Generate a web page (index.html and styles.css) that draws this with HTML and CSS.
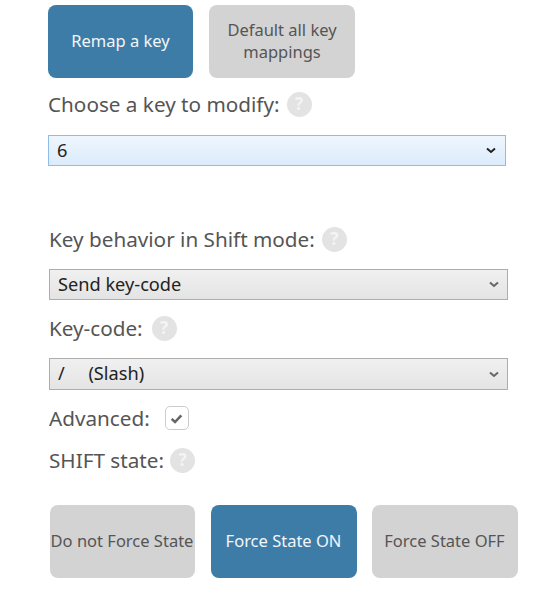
FILE: index.html
```html
<!DOCTYPE html>
<html lang="en">
<head>
<meta charset="utf-8">
<title>Remap keys</title>
<link rel="stylesheet" href="styles.css">
</head>
<body>
<main class="panel">
  <div class="btn-row top">
    <button class="btn active wide">Remap a key</button>
    <button class="btn wide2">Default all key mappings</button>
  </div>
  <div class="label choose">Choose a key to modify: <span class="help">?</span></div>
  <select class="sel focus"><option>6</option></select>
  <div class="label behavior">Key behavior in Shift mode: <span class="help">?</span></div>
  <select class="sel plain"><option>Send key-code</option></select>
  <div class="label keycode">Key-code: <span class="help">?</span></div>
  <select class="sel plain tall"><option>/&nbsp;&nbsp;&nbsp;&nbsp;&nbsp;(Slash)</option></select>
  <div class="label advanced">Advanced:
    <span class="check"><svg viewBox="0 0 14 14" width="15" height="15"><path d="M2.500 7.400 5.600 10.300 11.500 4" fill="none" stroke="#666" stroke-width="2.400"/></svg></span>
  </div>
  <div class="label shift">SHIFT state: <span class="help">?</span></div>
  <div class="btn-row bottom">
    <button class="btn s1">Do not Force State</button>
    <button class="btn active s2">Force State ON</button>
    <button class="btn s3">Force State OFF</button>
  </div>
</main>
</body>
</html>
```
FILE: styles.css
```css
* { box-sizing: border-box; }
html, body { margin: 0; padding: 0; background: #fff; }
body { width: 548px; height: 593px; overflow: hidden; font-family: "Noto Sans", "Open Sans", sans-serif; color: #555; }
.panel { display: flex; flex-direction: column; padding: 5px 0 0 48px; }
.btn-row { display: flex; }
.top { gap: 16px; }
.bottom { gap: 15px; margin: 32px 0 0 1.500px; }
.btn { height: 73px; border: 0; border-radius: 8px; background: #d3d3d3; color: #555; font: 16.500px/22px "Noto Sans", sans-serif; padding: 0 0 2px; }
.btn.active { background: #3e7ca8; color: #f2f6f9; }
.wide { width: 145px; }
.wide2 { width: 146px; padding: 0 12px 2px; }
.s1 { width: 145px; margin-right: 1px; white-space: nowrap; }
.s2 { width: 146px; }
.s3 { width: 146px; }
.label { display: flex; align-items: center; gap: 7px; font-size: 20.700px; line-height: 26px; color: #555; margin-left: 1px; }
.choose { margin: 13px 0 0; }
.behavior { margin-top: 60px; }
.keycode { margin-top: 15px; gap: 9px; }
.advanced { margin-top: 15px; gap: 15px; }
.shift { margin-top: 16px; gap: 6px; }
.help { display: inline-flex; width: 25px; height: 25px; border-radius: 50%; background: #e3e3e3; color: #f4f4f4; align-items: center; justify-content: center; font-size: 17px; font-weight: 700; }
.sel { appearance: none; display: block; width: 459px; height: 31px; margin: 17px 0 0 1px; padding: 0 8px 2px; border: 1px solid #adadad; border-radius: 0; font: 18.200px "Noto Sans", sans-serif; color: #222; background: url("data:image/svg+xml,%3Csvg xmlns='http://www.w3.org/2000/svg' width='10' height='7'%3E%3Cpath d='M1 1.500 5 5 9 1.500' fill='none' stroke='%23666' stroke-width='2'/%3E%3C/svg%3E") no-repeat right 8px center, linear-gradient(#f0f0f0, #e4e4e4); }
.focus { width: 458px; margin: 18px 0 0; height: 31px; border-color: #8fbce9; background: url("data:image/svg+xml,%3Csvg xmlns='http://www.w3.org/2000/svg' width='10' height='7'%3E%3Cpath d='M1 1.500 5 5 9 1.500' fill='none' stroke='%23222' stroke-width='2'/%3E%3C/svg%3E") no-repeat right 9px center, linear-gradient(#eef6fe, #dcebfb); }
.plain { margin-top: 17px; }
.tall { height: 32px; margin-top: 17px; }
.check { display: inline-flex; align-items: center; justify-content: center; width: 24px; height: 24px; border: 1px solid #ccc; border-radius: 5px; background: #fff; }
```
